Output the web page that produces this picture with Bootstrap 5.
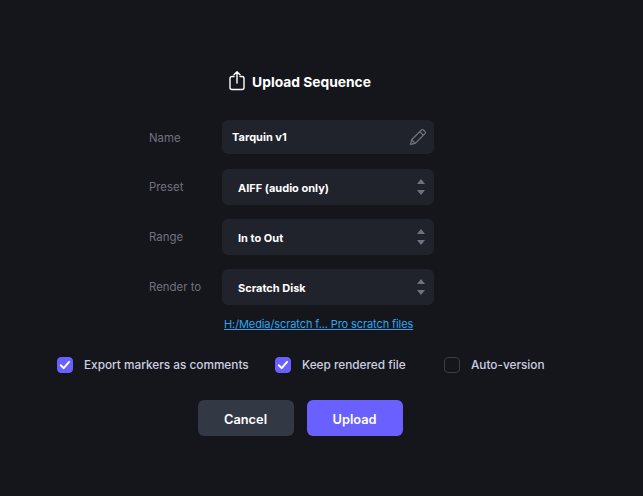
<!DOCTYPE html>
<html lang="en">
<head>
<meta charset="utf-8">
<title>Upload Sequence</title>
<link href="https://cdn.jsdelivr.net/npm/bootstrap@5.3.0/dist/css/bootstrap.min.css" rel="stylesheet">
<style>
html,body{height:100%;}
body{background:#15161b;font-family:Inter,"Liberation Sans",sans-serif;overflow:hidden;}
.shell{width:600px;padding-top:70px;}
.heading{height:25px;gap:7px;color:#fff;font-size:13.8px;font-weight:700;margin:0 0 25px;}
.heading svg{margin-bottom:3px;}
.fields{width:285px;margin-left:149px;gap:14px;}
.fld-label{width:73px;flex:none;color:#70727f;font-size:11.4px;padding-top:2px;}
.fld-box{width:212px;height:36px;background:#20222c;border:0;border-radius:6px;color:#fff;font-size:11px;font-weight:700;padding:2px 16px 0;position:relative;}
.fld-box:focus{background:#20222c;color:#fff;box-shadow:none;}
.fld-box.is-name{height:34px;padding:0 10px;margin-bottom:1px;}
.updown{position:absolute;right:8px;top:9px;}
.pen{position:absolute;right:7px;top:8px;}
.pathlink{display:block;margin:13px 0 0 224px;color:#2ca5ee;font-size:11px;line-height:13px;letter-spacing:-.1px;}
.opts{margin-top:24px;height:20px;font-size:11.8px;font-weight:500;color:#cdd0e2;padding-left:57px;}
.opt{margin:0;padding:0;gap:11px;}
.opt span{padding-top:2px;}
.opt .form-check-input{width:16px;height:16px;margin:0;float:none;background-color:#15161b;border:1px solid #3a3c46;border-radius:4px;}
.opt .form-check-input:checked{background-color:#6a60ff;border-color:#6a60ff;background-size:16px 16px;background-image:url("data:image/svg+xml,%3csvg xmlns='http://www.w3.org/2000/svg' viewBox='0 0 16 16'%3e%3cpath fill='none' stroke='%23fff' stroke-width='2' stroke-linecap='round' stroke-linejoin='round' d='M3.8 8.2l2.9 2.9 5.4-6.2'/%3e%3c/svg%3e");}
.opt-a{width:218px;}
.opt-b{width:169px;}
.actions{margin-top:25px;gap:13px;}
.act{width:96px;height:36px;border:0;border-radius:6px;font-size:12.8px;font-weight:600;color:#fff;padding:3px 0 0;}
.act-cancel,.act-cancel:hover{background:#333845;color:#fff;}
.act-upload,.act-upload:hover{background:#6a60ff;color:#fff;}
</style>
</head>
<body>
<main class="shell">
  <h1 class="heading d-flex align-items-center justify-content-center">
    <svg width="16" height="20" viewBox="0 0 16 20" fill="none" stroke="#fff" stroke-width="1.4" stroke-linecap="round" stroke-linejoin="round"><path d="M5 5.5H3a2 2 0 0 0-2 2v9a2 2 0 0 0 2 2h10a2 2 0 0 0 2-2v-9a2 2 0 0 0-2-2h-2"/><path d="M8 12V1M5 3.8 8 .8l3 3"/></svg>
    <span>Upload Sequence</span>
  </h1>
  <form class="fields d-flex flex-column">
    <div class="d-flex align-items-center">
      <label class="fld-label" for="f-name">Name</label>
      <div class="position-relative">
        <input id="f-name" class="form-control fld-box is-name" value="Tarquin v1">
        <svg class="pen" width="18" height="18" viewBox="0 0 18 18" fill="none" stroke="#70727f" stroke-width="1.3" stroke-linejoin="round"><path d="M1.6 16.4l1-4.6L12.4 2a1.4 1.4 0 0 1 2 0l1.6 1.6a1.4 1.4 0 0 1 0 2l-9.8 9.8z"/><path d="M10.8 3.6l3.6 3.6M2.6 11.8l3.6 3.6"/></svg>
      </div>
    </div>
    <div class="d-flex align-items-center">
      <label class="fld-label">Preset</label>
      <div class="fld-box d-flex align-items-center">AIFF (audio only)
        <svg class="updown" width="10" height="18" viewBox="0 0 10 18" fill="#70727f"><path d="M5 1l4 5H1zM5 17l4-5H1z"/></svg>
      </div>
    </div>
    <div class="d-flex align-items-center">
      <label class="fld-label">Range</label>
      <div class="fld-box d-flex align-items-center">In to Out
        <svg class="updown" width="10" height="18" viewBox="0 0 10 18" fill="#70727f"><path d="M5 1l4 5H1zM5 17l4-5H1z"/></svg>
      </div>
    </div>
    <div class="d-flex align-items-center">
      <label class="fld-label">Render to</label>
      <div class="fld-box d-flex align-items-center">Scratch Disk
        <svg class="updown" width="10" height="18" viewBox="0 0 10 18" fill="#70727f"><path d="M5 1l4 5H1zM5 17l4-5H1z"/></svg>
      </div>
    </div>
  </form>
  <a class="pathlink" href="#">H:/Media/scratch f... Pro scratch files</a>
  <div class="opts d-flex align-items-center">
    <label class="form-check opt opt-a d-flex align-items-center"><input class="form-check-input" type="checkbox" checked><span>Export markers as comments</span></label>
    <label class="form-check opt opt-b d-flex align-items-center"><input class="form-check-input" type="checkbox" checked><span>Keep rendered file</span></label>
    <label class="form-check opt d-flex align-items-center"><input class="form-check-input" type="checkbox"><span>Auto-version</span></label>
  </div>
  <div class="actions d-flex justify-content-center">
    <button class="btn act act-cancel" type="button">Cancel</button>
    <button class="btn act act-upload" type="button">Upload</button>
  </div>
</main>
<script src="https://cdn.jsdelivr.net/npm/bootstrap@5.3.0/dist/js/bootstrap.bundle.min.js"></script>
</body>
</html>
